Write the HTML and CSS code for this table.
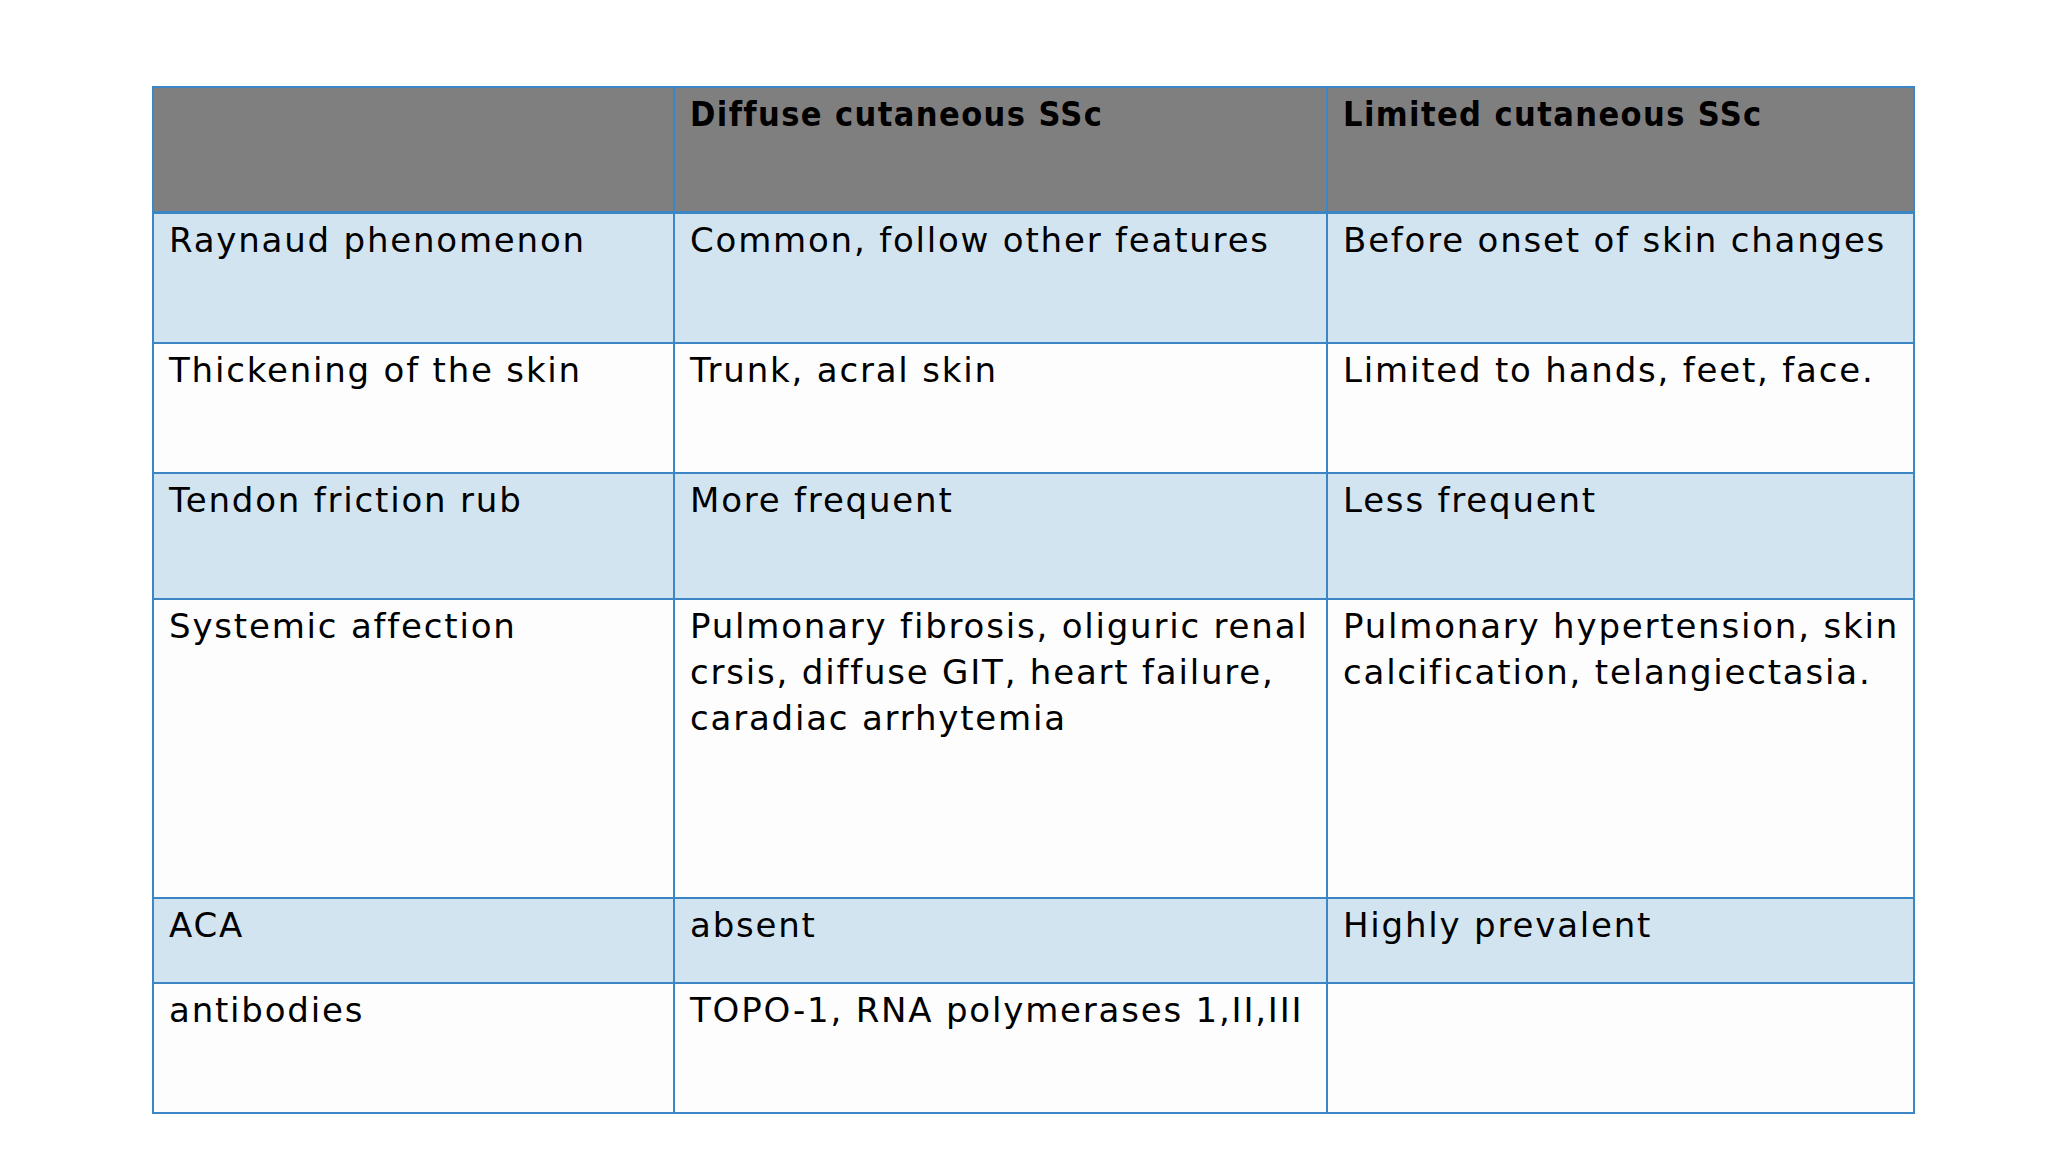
FILE: index.html
```html
<!DOCTYPE html>
<html lang="en">
<head>
<meta charset="utf-8">
<title>Diffuse vs Limited cutaneous SSc</title>
<link rel="stylesheet" href="styles.css">
</head>
<body>
<main class="slide">
  <table class="cmp">
    <colgroup>
      <col class="c1">
      <col class="c2">
      <col class="c3">
    </colgroup>
    <thead>
      <tr class="head">
        <th></th>
        <th>Diffuse cutaneous SSc</th>
        <th>Limited cutaneous SSc</th>
      </tr>
    </thead>
    <tbody>
      <tr class="blue r1">
        <td>Raynaud phenomenon</td>
        <td>Common, follow other features</td>
        <td>Before onset of skin changes</td>
      </tr>
      <tr class="white r2">
        <td>Thickening of the skin</td>
        <td>Trunk, acral skin</td>
        <td>Limited to hands, feet, face.</td>
      </tr>
      <tr class="blue r3">
        <td>Tendon friction rub</td>
        <td>More frequent</td>
        <td>Less frequent</td>
      </tr>
      <tr class="white r4">
        <td>Systemic affection</td>
        <td>Pulmonary fibrosis, oliguric renal crsis, diffuse GIT, heart failure, caradiac arrhytemia</td>
        <td>Pulmonary hypertension, skin calcification, telangiectasia.</td>
      </tr>
      <tr class="blue r5">
        <td>ACA</td>
        <td>absent</td>
        <td>Highly prevalent</td>
      </tr>
      <tr class="white r6">
        <td>antibodies</td>
        <td>TOPO-1, RNA polymerases 1,II,III</td>
        <td></td>
      </tr>
    </tbody>
  </table>
</main>
</body>
</html>
```
FILE: styles.css
```css
html, body {
  margin: 0;
  padding: 0;
  background: #ffffff;
}

body {
  width: 2048px;
  height: 1152px;
  overflow: hidden;
  font-family: "DejaVu Sans", sans-serif;
  color: #000000;
}

.slide {
  padding: 86px 0 0 152px;
}

.cmp {
  border-collapse: collapse;
  table-layout: fixed;
  width: 1761px;
  font-size: 34px;
  line-height: 46px;
  letter-spacing: 1.8px;
}

.c1 { width: 521px; }
.c2 { width: 653px; }
.c3 { width: 587px; }

.cmp th,
.cmp td {
  border: 2px solid #3d86c6;
  padding: 3px 6px 0 15px;
  text-align: left;
  vertical-align: top;
  font-weight: normal;
}

.cmp th {
  font-family: "DejaVu Sans Condensed", "DejaVu Sans", sans-serif;
  font-stretch: condensed;
  font-weight: bold;
  letter-spacing: 1.4px;
  background: #807f80;
  border-bottom: 3px solid #3d86c6;
}

.head { height: 125px; }
.r1 { height: 131px; }
.r2 { height: 130px; }
.r3 { height: 126px; }
.r4 { height: 299px; }
.r5 { height: 85px; }
.r6 { height: 130px; }

.blue td { background: #d3e4f1; }
.white td { background: #fdfdfe; }
```
